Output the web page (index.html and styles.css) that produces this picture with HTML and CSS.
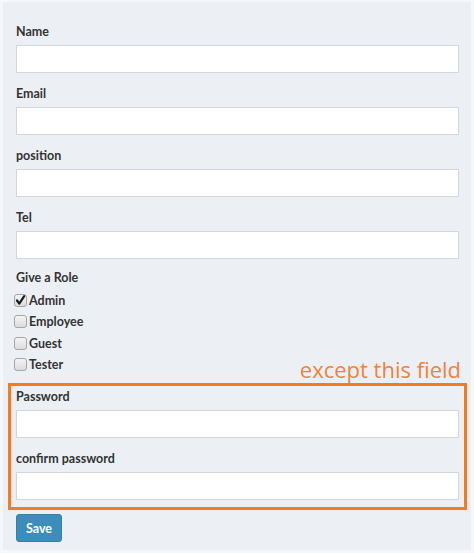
FILE: index.html
```html
<!DOCTYPE html>
<html>
<head>
<meta charset="utf-8">
<link rel="stylesheet" href="styles.css">
</head>
<body>
<div class="panel">
  <div class="group">
    <label class="lbl">Name</label>
    <input class="field" type="text">
  </div>
  <div class="group">
    <label class="lbl">Email</label>
    <input class="field" type="text">
  </div>
  <div class="group">
    <label class="lbl">position</label>
    <input class="field" type="text">
  </div>
  <div class="group group-last">
    <label class="lbl">Tel</label>
    <input class="field" type="text">
  </div>
  <div class="roles">
    <div class="lbl role-title">Give a Role</div>
    <div class="check"><span class="box"><svg viewBox="0 0 13 13" width="13" height="13"><path d="M3 6.5 L5.3 9.6 L10.2 2.2" fill="none" stroke="#1a1a1a" stroke-width="2.2" stroke-linecap="round" stroke-linejoin="round"/></svg></span>Admin</div>
    <div class="check"><span class="box"></span>Employee</div>
    <div class="check"><span class="box"></span>Guest</div>
    <div class="check"><span class="box"></span>Tester</div>
  </div>
  <div class="highlight">
    <span class="note">except this field</span>
    <div class="group">
      <label class="lbl">Password</label>
      <input class="field" type="password">
    </div>
    <div class="group group-end">
      <label class="lbl">confirm password</label>
      <input class="field" type="password">
    </div>
  </div>
  <button class="save">Save</button>
</div>
</body>
</html>
```

FILE: styles.css
```css
html, body {
  margin: 0;
  padding: 0;
}
body {
  background: #f6f7fa;
  font-family: Lato, "Liberation Sans", sans-serif;
  color: #333;
}
.panel {
  margin: 2px 3px 3px 3px;
  background: #ecf0f5;
  padding: 21px 12px 8px 13px;
}
.group {
  display: flex;
  flex-direction: column;
  margin-bottom: 12px;
}
.group-last {
  margin-bottom: 10px;
}
.lbl {
  display: block;
  font-size: 12.5px;
  line-height: 17px;
  font-weight: 700;
  color: #333;
  margin-bottom: 5px;
}
.field {
  display: block;
  box-sizing: border-box;
  width: 100%;
  height: 28px;
  margin: 0;
  border: 1px solid #d2d6de;
  background: #fff;
  padding: 4px 8px;
  outline: none;
}
.roles {
  display: flex;
  flex-direction: column;
}
.role-title {
  margin-bottom: 4px;
}
.check {
  display: flex;
  align-items: center;
  height: 21.3px;
  font-size: 12.5px;
  font-weight: 700;
  color: #333;
  margin-left: -2px;
}
.box {
  box-sizing: border-box;
  width: 13px;
  height: 13px;
  border: 1px solid #a6a6a6;
  border-radius: 3px;
  background: linear-gradient(#f4f4f4, #dcdcdc);
  margin-right: 2px;
  display: flex;
  align-items: center;
  justify-content: center;
  overflow: visible;
}
.box svg {
  display: block;
  flex: none;
}
.highlight {
  position: relative;
  margin: 8px -8px 0 -8px;
  border: 3px solid #f47b20;
  padding: 2px 5px 7px 5px;
}
.group-end {
  margin-bottom: 0;
}
.note {
  position: absolute;
  right: 3px;
  bottom: 100%;
  margin-bottom: 3px;
  font-family: "Open Sans", sans-serif;
  font-size: 22px;
  line-height: 28px;
  color: #f0823a;
  white-space: nowrap;
}
.save {
  display: block;
  margin-top: 4px;
  height: 28px;
  padding: 0 9px;
  background: #3c8dbc;
  border: 1px solid #367fa9;
  border-radius: 3px;
  color: #fff;
  font-family: Lato, "Liberation Sans", sans-serif;
  font-size: 12.5px;
  font-weight: 700;
}
```
